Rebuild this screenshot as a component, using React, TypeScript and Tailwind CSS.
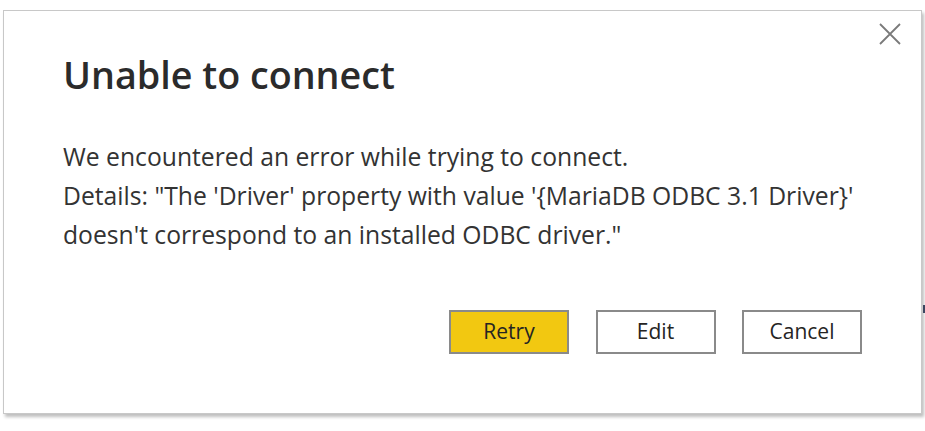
export default function App() {
    return (
        <div className="w-[925px] h-[431px] bg-white relative overflow-hidden" style={{ fontFamily: '"Open Sans", "Noto Sans", sans-serif' }}>
            <div className="ml-[3px] mt-[10px] w-[919px] h-[404px] bg-white border border-[#c8c8c8] shadow-[2px_3px_3px_rgba(0,0,0,0.25)] relative flex flex-col">
                <button className="absolute right-[20px] top-[12px]" aria-label="Close">
                    <svg width="22" height="22" viewBox="0 0 22 22" fill="none" stroke="#7a7a7a" strokeWidth="1.8">
                        <path d="M1 1L21 21M21 1L1 21" />
                    </svg>
                </button>

                <h1 className="pl-[59px] pt-[40px] text-[37.7px] leading-[48px] font-semibold text-[#2b2b2b]">Unable to connect</h1>

                <div className="pl-[59px] pt-[38px] text-[24.7px] leading-[39px] text-[#333]">
                    <p>We encountered an error while trying to connect.</p>
                    <p>Details: "The 'Driver' property with value '{'{'}MariaDB ODBC 3.1 Driver{'}'}'</p>
                    <p>doesn't correspond to an installed ODBC driver."</p>
                </div>

                <div className="flex justify-end gap-[26.5px] pr-[59px] mt-[56px]">
                    <button className="w-[120px] h-[44px] bg-[#f2c811] border-2 border-[#8a8a8a] text-[21px] text-[#252423]">Retry</button>
                    <button className="w-[120px] h-[44px] bg-white border-2 border-[#8a8a8a] text-[21px] text-[#252423]">Edit</button>
                    <button className="w-[120px] h-[44px] bg-white border-2 border-[#8a8a8a] text-[21px] text-[#252423]">Cancel</button>
                </div>
            </div>
            <span className="absolute left-[923px] top-[305px] w-[2px] h-[8px] bg-[#3a4660]" />
        </div>
    );
}
